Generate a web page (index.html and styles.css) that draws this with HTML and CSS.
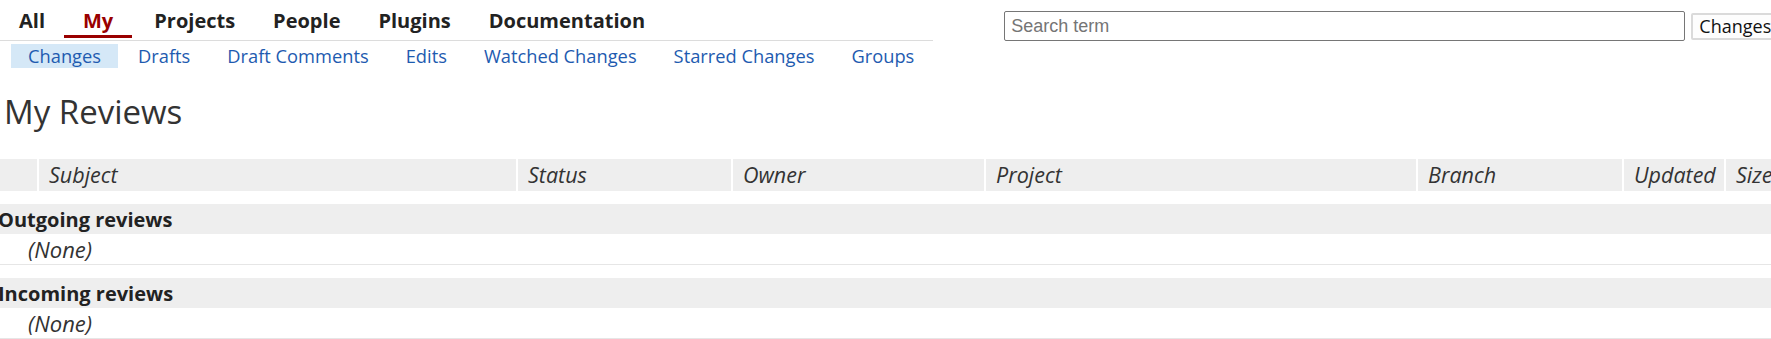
FILE: index.html
```html
<!DOCTYPE html>
<html lang="en">
<head>
    <meta charset="UTF-8">
    <title>My Reviews</title>
    <link rel="stylesheet" href="styles.css">
</head>
<body>
    <div class="topbar">
        <div class="menus">
            <ul class="topmenu">
                <li>All</li>
                <li class="active">My</li>
                <li>Projects</li>
                <li>People</li>
                <li>Plugins</li>
                <li>Documentation</li>
            </ul>
            <ul class="submenu">
                <li class="selected">Changes</li>
                <li>Drafts</li>
                <li>Draft Comments</li>
                <li>Edits</li>
                <li>Watched Changes</li>
                <li>Starred Changes</li>
                <li>Groups</li>
            </ul>
        </div>
        <form class="search">
            <input type="text" class="search-box" placeholder="Search term">
            <button type="button" class="search-btn">Changes</button>
        </form>
    </div>

    <h1>My Reviews</h1>

    <table class="changes">
        <colgroup>
            <col class="c-icon">
            <col class="c-subject">
            <col class="c-status">
            <col class="c-owner">
            <col class="c-project">
            <col class="c-branch">
            <col class="c-updated">
            <col class="c-size">
        </colgroup>
        <thead>
            <tr>
                <th></th>
                <th>Subject</th>
                <th>Status</th>
                <th>Owner</th>
                <th>Project</th>
                <th>Branch</th>
                <th>Updated</th>
                <th>Size</th>
            </tr>
        </thead>
        <tbody>
            <tr class="spacer"><td colspan="8"></td></tr>
            <tr class="section"><td colspan="8">Outgoing reviews</td></tr>
            <tr class="empty"><td colspan="8">(None)</td></tr>
            <tr class="spacer"><td colspan="8"></td></tr>
            <tr class="section"><td colspan="8">Incoming reviews</td></tr>
            <tr class="empty"><td colspan="8">(None)</td></tr>
        </tbody>
    </table>
</body>
</html>
```

FILE: styles.css
```css
* {
    box-sizing: border-box;
}

body {
    margin: 0;
    font-family: 'Open Sans', 'Noto Sans', sans-serif;
    color: #333;
    background: #fff;
    overflow: hidden;
}

ul {
    list-style: none;
    margin: 0;
    padding: 0;
}

.topbar {
    display: flex;
    align-items: flex-start;
    white-space: nowrap;
}

.menus {
    flex: none;
}

.topmenu {
    display: flex;
    padding-top: 8px;
    padding-bottom: 2px;
    border-bottom: 1px solid #dcdcdc;
}

.topmenu li {
    padding: 0 19px 1px;
    font-size: 20px;
    font-weight: bold;
    line-height: 26px;
    color: #222;
    border-bottom: 3px solid transparent;
}

.topmenu li:nth-child(3) {
    margin-left: 3px;
}

.topmenu li.active {
    color: #990000;
    border-bottom-color: #990000;
}

.submenu {
    display: flex;
    gap: 3px;
    margin-top: 3px;
    padding: 0 2px 0 11px;
}

.submenu li {
    padding: 0 17px;
    font-size: 18.3px;
    line-height: 24px;
    color: #1e5bb0;
}

.submenu li.selected {
    background: #d5e8f7;
}

.search {
    display: flex;
    align-items: center;
    gap: 6px;
    margin: 11px 0 0 71px;
}

.search-box {
    width: 681px;
    height: 30px;
    padding: 0 6px;
    border: 1px solid #767676;
    border-radius: 2px;
    font-family: 'Liberation Sans', Arial, sans-serif;
    font-size: 18px;
    color: #222;
}

.search-box::placeholder {
    color: #757575;
}

.search-btn {
    min-width: 110px;
    height: 27px;
    padding: 0 6px;
    border: 2px solid #dadada;
    border-radius: 2px;
    background: #fdfdfd;
    font-family: 'Open Sans', sans-serif;
    font-size: 18px;
    line-height: 22px;
    color: #111;
    text-align: left;
}

h1 {
    margin: 24px 0 27px 4px;
    font-size: 33px;
    font-weight: normal;
    line-height: 40px;
    color: #333;
}

.changes {
    width: 1786px;
    table-layout: fixed;
    border-collapse: separate;
    border-spacing: 0;
}

.c-icon { width: 37px; }
.c-subject { width: 479px; }
.c-status { width: 215px; }
.c-owner { width: 253px; }
.c-project { width: 432px; }
.c-branch { width: 206px; }
.c-updated { width: 102px; }
.c-size { width: 62px; }

.changes th {
    height: 32px;
    padding: 0 0 0 10px;
    background: #eee;
    border-left: 2px solid #fff;
    font-size: 21.5px;
    font-style: italic;
    font-weight: normal;
    text-align: left;
    line-height: 32px;
    color: #333;
    white-space: nowrap;
    overflow: hidden;
}

.changes th:first-child {
    border-left: none;
}

.changes td {
    padding: 0;
    font-size: 20px;
    line-height: 30px;
    white-space: nowrap;
}

.spacer td {
    height: 13px;
}

.section td {
    background: #eee;
    font-weight: bold;
    text-indent: -2px;
    color: #222;
    line-height: 29px;
    padding-top: 1px;
}

.empty td {
    padding-left: 28px;
    font-size: 22px;
    font-style: italic;
    border-bottom: 1px solid #e6e6e6;
}
```
